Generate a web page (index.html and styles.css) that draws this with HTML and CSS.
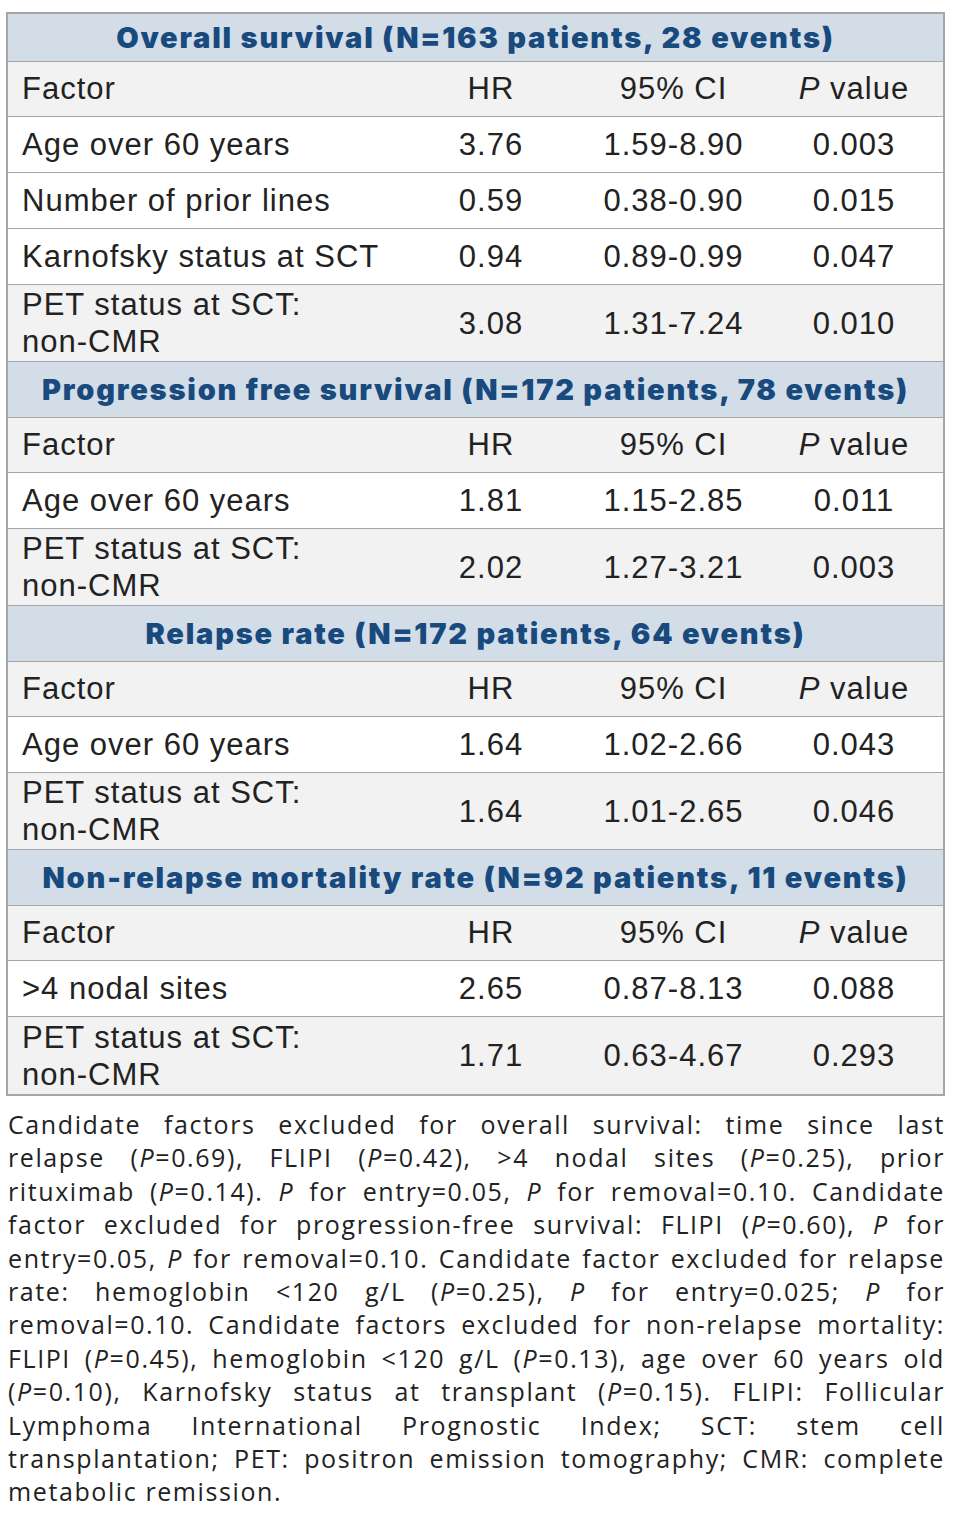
FILE: index.html
```html
<!DOCTYPE html>
<html lang="en">
<head>
<meta charset="utf-8">
<title>Multivariable analysis</title>
<link rel="stylesheet" href="styles.css">
</head>
<body>
<div class="page">
  <div class="table">
    <div class="section first">Overall survival (N=163 patients, 28 events)</div>
    <div class="row head"><span class="factor">Factor</span><span>HR</span><span>95% CI</span><span><i>P</i> value</span></div>
    <div class="row"><span class="factor">Age over 60 years</span><span>3.76</span><span>1.59-8.90</span><span>0.003</span></div>
    <div class="row"><span class="factor">Number of prior lines</span><span>0.59</span><span>0.38-0.90</span><span>0.015</span></div>
    <div class="row"><span class="factor">Karnofsky status at SCT</span><span>0.94</span><span>0.89-0.99</span><span>0.047</span></div>
    <div class="row tall"><span class="factor">PET status at SCT:<br>non-CMR</span><span>3.08</span><span>1.31-7.24</span><span>0.010</span></div>

    <div class="section">Progression free survival (N=172 patients, 78 events)</div>
    <div class="row head"><span class="factor">Factor</span><span>HR</span><span>95% CI</span><span><i>P</i> value</span></div>
    <div class="row"><span class="factor">Age over 60 years</span><span>1.81</span><span>1.15-2.85</span><span>0.011</span></div>
    <div class="row tall"><span class="factor">PET status at SCT:<br>non-CMR</span><span>2.02</span><span>1.27-3.21</span><span>0.003</span></div>

    <div class="section">Relapse rate (N=172 patients, 64 events)</div>
    <div class="row head"><span class="factor">Factor</span><span>HR</span><span>95% CI</span><span><i>P</i> value</span></div>
    <div class="row"><span class="factor">Age over 60 years</span><span>1.64</span><span>1.02-2.66</span><span>0.043</span></div>
    <div class="row tall"><span class="factor">PET status at SCT:<br>non-CMR</span><span>1.64</span><span>1.01-2.65</span><span>0.046</span></div>

    <div class="section">Non-relapse mortality rate (N=92 patients, 11 events)</div>
    <div class="row head"><span class="factor">Factor</span><span>HR</span><span>95% CI</span><span><i>P</i> value</span></div>
    <div class="row"><span class="factor">&gt;4 nodal sites</span><span>2.65</span><span>0.87-8.13</span><span>0.088</span></div>
    <div class="row tall last"><span class="factor">PET status at SCT:<br>non-CMR</span><span>1.71</span><span>0.63-4.67</span><span>0.293</span></div>
  </div>

  <p class="note">
    <span class="ln">Candidate factors excluded for overall survival: time since last</span>
    <span class="ln">relapse (<i>P</i>=0.69), FLIPI (<i>P</i>=0.42), &gt;4 nodal sites (<i>P</i>=0.25), prior</span>
    <span class="ln">rituximab (<i>P</i>=0.14). <i>P</i> for entry=0.05, <i>P</i> for removal=0.10. Candidate</span>
    <span class="ln">factor excluded for progression-free survival: FLIPI (<i>P</i>=0.60), <i>P</i> for</span>
    <span class="ln">entry=0.05, <i>P</i> for removal=0.10. Candidate factor excluded for relapse</span>
    <span class="ln">rate: hemoglobin &lt;120 g/L (<i>P</i>=0.25), <i>P</i> for entry=0.025; <i>P</i> for</span>
    <span class="ln">removal=0.10. Candidate factors excluded for non-relapse mortality:</span>
    <span class="ln">FLIPI (<i>P</i>=0.45), hemoglobin &lt;120 g/L (<i>P</i>=0.13), age over 60 years old</span>
    <span class="ln">(<i>P</i>=0.10), Karnofsky status at transplant (<i>P</i>=0.15). FLIPI: Follicular</span>
    <span class="ln">Lymphoma International Prognostic Index; SCT: stem cell</span>
    <span class="ln">transplantation; PET: positron emission tomography; CMR: complete</span>
    <span class="ln final">metabolic remission.</span>
  </p>
</div>
</body>
</html>
```

FILE: styles.css
```css
html, body {
  margin: 0;
  padding: 0;
  background: #ffffff;
}

.page {
  width: 939px;
  padding: 12px 0 0 6px;
}

.table {
  border: 2px solid #a6a6a6;
  box-sizing: border-box;
  width: 939px;
  font-family: "Liberation Sans", Arial, sans-serif;
  font-size: 31px;
  letter-spacing: 1px;
  color: #222222;
}

.section {
  height: 56px;
  box-sizing: border-box;
  border-bottom: 1px solid #a6a6a6;
  background: #d3dde7;
  color: #184a7e;
  font-family: "Inter", "Open Sans", sans-serif;
  font-weight: 900;
  font-size: 29px;
  letter-spacing: 1.8px;
  display: flex;
  align-items: center;
  justify-content: center;
}

.section.first {
  height: 48px;
}

.row {
  display: grid;
  grid-template-columns: 392px 182px 183px 1fr;
  align-items: center;
  height: 56px;
  box-sizing: border-box;
  border-bottom: 1px solid #a6a6a6;
  background: #ffffff;
}

.row > span {
  text-align: center;
}

.row > .factor {
  text-align: left;
  padding-left: 14px;
}

.row.head {
  height: 55px;
  background: #f2f2f2;
}

.row.tall {
  height: 77px;
  background: #f2f2f2;
  line-height: 37px;
}

.row.last {
  border-bottom: none;
}

.note {
  margin: 0;
  padding: 12px 0 0 2px;
  width: 937px;
  font-family: "Open Sans", "DejaVu Sans", sans-serif;
  font-size: 25px;
  letter-spacing: 1.6px;
  line-height: 33.4px;
  color: #222222;
}

.ln {
  display: block;
  text-align: justify;
  text-align-last: justify;
  white-space: nowrap;
}

.ln.final {
  text-align-last: left;
}
```
